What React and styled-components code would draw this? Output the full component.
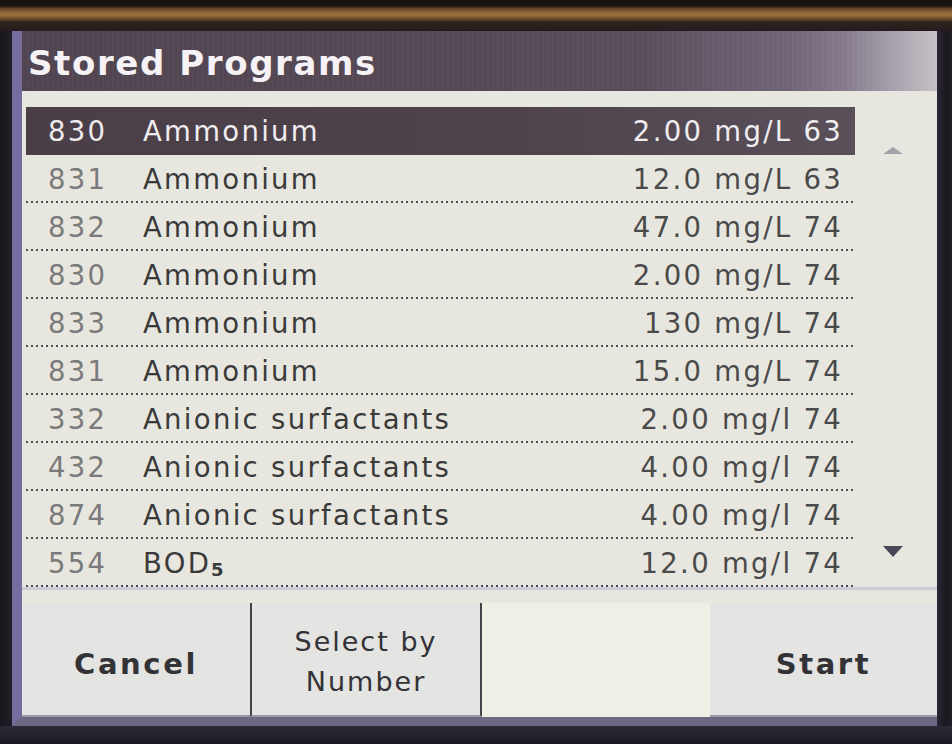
import React from 'react';
import styled, { createGlobalStyle } from 'styled-components';

const GlobalStyle = createGlobalStyle`
  * { box-sizing: border-box; }
  html, body {
    margin: 0;
    padding: 0;
    background: #1c1820;
  }
  body {
    font-family: 'DejaVu Sans', 'Liberation Sans', sans-serif;
  }
`;

const Device = styled.div`
  width: 952px;
  height: 744px;
  display: flex;
  flex-direction: column;
  background: #1d1a21;
  overflow: hidden;
`;

const TopBezel = styled.div`
  height: 31px;
  flex-shrink: 0;
  background: linear-gradient(
    180deg,
    #15110e 0px,
    #1a140f 6px,
    #5a3e22 8px,
    #8c6536 12px,
    #9a703e 15px,
    #6a4a2a 19px,
    #2e241e 22px,
    #221c1e 31px
  );
`;

const Middle = styled.div`
  display: flex;
  height: 695px;
`;

const SideBezel = styled.div`
  width: ${({ $w }) => $w}px;
  flex-shrink: 0;
  background: ${({ $right }) =>
    $right
      ? 'linear-gradient(90deg, #2a2634 0%, #1b1820 60%, #231f27 100%)'
      : 'linear-gradient(90deg, #18151b 0%, #221e2a 100%)'};
`;

const BottomBezel = styled.div`
  height: 18px;
  flex-shrink: 0;
  background: linear-gradient(180deg, #2c2a36 0%, #1a181e 100%);
`;

const Screen = styled.div`
  width: 925px;
  display: flex;
  flex-direction: column;
  background: #e7e7df;
  border-left: 10px solid #756c9f;
  border-bottom: 9px solid #6b6884;
`;

const Header = styled.div`
  height: 60px;
  flex-shrink: 0;
  display: flex;
  align-items: center;
  padding: 3px 0 0 6px;
  background:
    repeating-linear-gradient(90deg, rgba(255, 255, 255, 0.025) 0 2px, transparent 2px 5px),
    linear-gradient(
      90deg,
      #504450 0%,
      #544955 50%,
      #584e5a 68%,
      #655b6a 76%,
      #6f6576 84%,
      #857b8c 90%,
      #a69eaa 95%,
      #c6c0c6 100%
    );
  color: #f6f2f6;
  font-weight: bold;
  font-size: 34px;
  letter-spacing: 1.6px;
`;

const Spacer = styled.div`
  height: ${({ $h }) => $h}px;
  flex-shrink: 0;
`;

const Body = styled.div`
  display: flex;
  flex-shrink: 0;
  border-bottom: 3px solid #cdc9da;
`;

const List = styled.div`
  width: 829px;
  margin-left: 4px;
  display: flex;
  flex-direction: column;
`;

const Row = styled.div`
  height: 48px;
  display: grid;
  grid-template-columns: 95px 1fr auto;
  align-items: center;
  padding: 0 12px 0 22px;
  font-size: 27.5px;
  letter-spacing: 2.3px;
  background: ${({ $selected }) =>
    $selected
      ? 'linear-gradient(90deg, #4a3f47 0%, #4d424b 55%, #5a505a 100%)'
      : 'linear-gradient(90deg, #4e4e52 45%, transparent 45%) left bottom / 5px 2px repeat-x'};
`;

const Num = styled.span`
  color: ${({ $selected }) => ($selected ? '#eeeaee' : '#7a7a7a')};
`;

const Name = styled.span`
  color: ${({ $selected }) => ($selected ? '#f0ecf0' : '#3a3a3a')};
`;

const Value = styled.span`
  text-align: right;
  color: ${({ $selected }) => ($selected ? '#f0ecf0' : '#4a4a4a')};
`;

const Sub = styled.span`
  font-size: 18px;
  font-weight: bold;
  letter-spacing: 0;
  vertical-align: -3px;
`;

const ScrollColumn = styled.div`
  flex: 1;
  display: flex;
  flex-direction: column;
  justify-content: space-between;
  align-items: center;
  padding: 40px 0 30px 0;
  margin-left: -6px;
`;

const Arrow = styled.div`
  width: 0;
  height: 0;
  border-left: 10px solid transparent;
  border-right: 10px solid transparent;
  ${({ $up }) =>
    $up
      ? 'border-bottom: 7px solid #a4a2aa;'
      : 'border-top: 11px solid #4a4858;'}
`;

const ButtonBar = styled.div`
  flex: 1;
  display: grid;
  grid-template-columns: 228px 232px 228px 1fr;
  background: #eeeee5;
`;

const Button = styled.div`
  display: flex;
  align-items: center;
  justify-content: center;
  text-align: center;
  color: #333236;
  background: ${({ $blank }) => ($blank ? '#efefe6' : '#e4e4e2')};
  font-size: ${({ $bold }) => ($bold ? '29px' : '27px')};
  font-weight: ${({ $bold }) => ($bold ? 'bold' : 'normal')};
  letter-spacing: ${({ $bold }) => ($bold ? '2.6px' : '2px')};
  line-height: 40px;
  border-left: ${({ $framed }) => ($framed ? '2px solid #434248' : 'none')};
  border-right: ${({ $framed }) => ($framed ? '2px solid #434248' : 'none')};
  border-bottom: ${({ $blank }) => ($blank ? 'none' : '2px solid #9a98a4')};
  padding-top: ${({ $bold }) => ($bold ? '10px' : '5px')};
`;

const programs = [
  { num: '830', name: 'Ammonium', value: '2.00 mg/L 63' },
  { num: '831', name: 'Ammonium', value: '12.0 mg/L 63' },
  { num: '832', name: 'Ammonium', value: '47.0 mg/L 74' },
  { num: '830', name: 'Ammonium', value: '2.00 mg/L 74' },
  { num: '833', name: 'Ammonium', value: '130 mg/L 74' },
  { num: '831', name: 'Ammonium', value: '15.0 mg/L 74' },
  { num: '332', name: 'Anionic surfactants', value: '2.00 mg/l 74' },
  { num: '432', name: 'Anionic surfactants', value: '4.00 mg/l 74' },
  { num: '874', name: 'Anionic surfactants', value: '4.00 mg/l 74' },
  { num: '554', name: 'BOD', sub: '5', value: '12.0 mg/l 74' },
];

const App = () => {
  return (
    <>
      <GlobalStyle />
      <Device>
        <TopBezel />
        <Middle>
          <SideBezel $w={12} />
          <Screen>
            <Header>Stored Programs</Header>
            <Spacer $h={16} />
            <Body>
              <List>
                {programs.map((p, i) => {
                  const selected = i === 0;
                  return (
                    <Row key={i} $selected={selected}>
                      <Num $selected={selected}>{p.num}</Num>
                      <Name $selected={selected}>
                        {p.name}
                        {p.sub && <Sub>{p.sub}</Sub>}
                      </Name>
                      <Value $selected={selected}>{p.value}</Value>
                    </Row>
                  );
                })}
              </List>
              <ScrollColumn>
                <Arrow $up />
                <Arrow />
              </ScrollColumn>
            </Body>
            <Spacer $h={13} />
            <ButtonBar>
              <Button $bold>Cancel</Button>
              <Button $framed>
                Select by
                <br />
                Number
              </Button>
              <Button $blank />
              <Button $bold>Start</Button>
            </ButtonBar>
          </Screen>
          <SideBezel $w={15} $right />
        </Middle>
        <BottomBezel />
      </Device>
    </>
  );
};

export default App;
